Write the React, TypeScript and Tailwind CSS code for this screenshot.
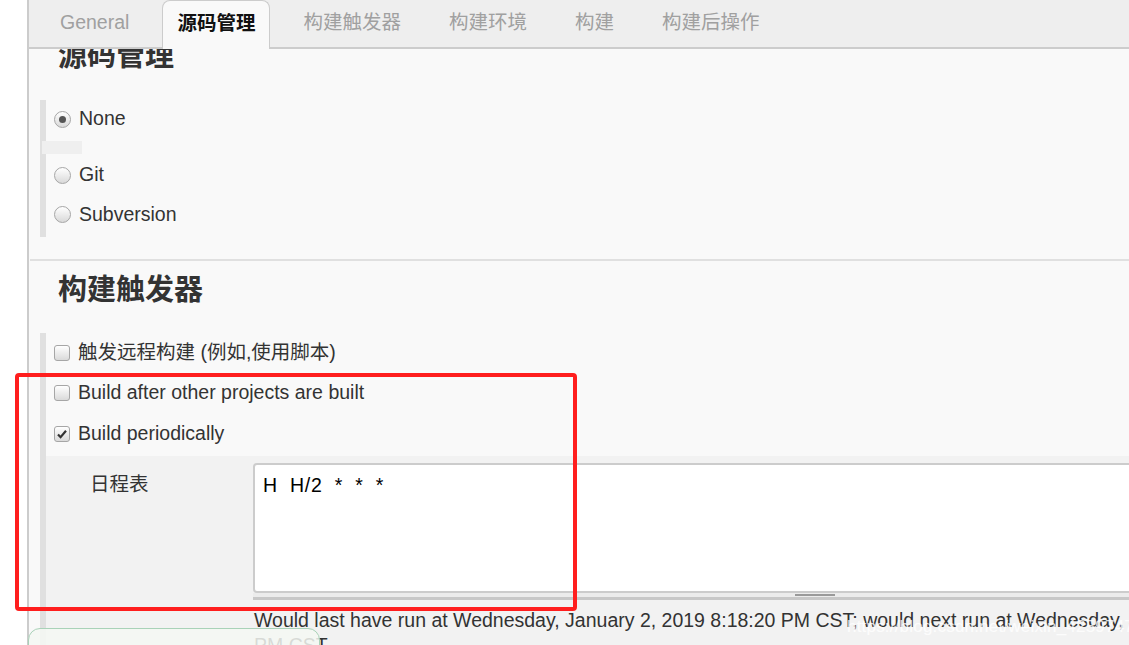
import React from "react";

const tabs = ["General", "源码管理", "构建触发器", "构建环境", "构建", "构建后操作"];

function Radio({ checked }: { checked?: boolean }) {
  return (
    <span className="flex h-[17px] w-[17px] shrink-0 items-center justify-center rounded-full border border-[#a6a6a6] bg-linear-to-b from-white to-[#d9d9d9]">
      {checked && <span className="h-[7px] w-[7px] rounded-full bg-[#555]" />}
    </span>
  );
}

function Checkbox({ checked }: { checked?: boolean }) {
  return (
    <span className="flex h-[16px] w-[16px] shrink-0 items-center justify-center rounded-[3px] border border-[#a6a6a6] bg-linear-to-b from-white to-[#dadada]">
      {checked && (
        <svg width="12" height="12" viewBox="0 0 12 12">
          <path d="M2 6.5 L4.6 9.2 L10 2.8" fill="none" stroke="#333" strokeWidth="2.2" />
        </svg>
      )}
    </span>
  );
}

export default function App() {
  return (
    <div className="relative flex h-[645px] w-full overflow-hidden bg-white font-['Liberation_Sans','Noto_Sans_CJK_SC',sans-serif] text-[19.5px] text-[#333]">
      <div className="w-[27px] shrink-0" />

      <div className="flex w-[1420px] shrink-0 flex-col border-l-2 border-[#ccc] bg-[#f9f9f9]">
        {/* Tabs */}
        <div className="relative z-10 flex h-[49px] shrink-0 items-end gap-[18px] border-b-2 border-[#ccc] bg-[#eee] pl-[16px]">
          {tabs.map((t, i) =>
            i === 1 ? (
              <div
                key={t}
                className="-mb-[2px] flex h-[49px] items-center rounded-t-[8px] border border-b-0 border-[#ccc] bg-[#f9f9f9] px-[14px] pb-[3px] font-bold text-[#111]"
              >
                {t}
              </div>
            ) : (
              <div key={t} className="flex h-[47px] items-center px-[15px] pb-[2px] text-[#a0a0a0]">
                {t}
              </div>
            )
          )}
        </div>

        {/* Content */}
        <div className="flex-1 overflow-hidden">
          <h2 className="-mt-[10px] pl-[29px] text-[29px] leading-[35px] font-bold text-[#333]">源码管理</h2>

          <div className="mt-[26px] ml-[11px] flex flex-col border-l-[6px] border-[#e0e0e0] pl-[8px]">
            <label className="flex h-[38px] items-center gap-[8px]">
              <Radio checked />
              None
            </label>
            <div className="h-[18px] pt-[3px]">
              <div className="-ml-[12px] h-[13px] w-[40px] bg-[#efefef]" />
            </div>
            <label className="flex h-[38px] items-center gap-[8px]">
              <Radio />
              Git
            </label>
            <label className="flex h-[43px] items-center gap-[8px] pb-[2px]">
              <Radio />
              Subversion
            </label>
          </div>

          <div className="mt-[22px] ml-[1px] h-[2px] bg-[#e0e0e0]" />

          <h2 className="mt-[12px] pl-[29px] text-[29px] leading-[35px] font-bold text-[#333]">构建触发器</h2>

          <div className="mt-[25px] ml-[11px] flex flex-col border-l-[6px] border-[#e0e0e0]">
            <label className="flex h-[39px] items-center gap-[8px] pl-[8px]">
              <Checkbox />
              触发远程构建 (例如,使用脚本)
            </label>
            <label className="flex h-[41px] items-center gap-[8px] pl-[8px]">
              <Checkbox />
              Build after other projects are built
            </label>
            <label className="flex h-[43px] items-center gap-[8px] pl-[8px] pb-[1px]">
              <Checkbox checked />
              Build periodically
            </label>

            <div className="flex bg-[#f2f2f2] pt-[7px] pb-[40px]">
              <div className="w-[207px] shrink-0 pt-[8px] pl-[44px] leading-[26px]">日程表</div>
              <div className="flex w-[1124px] shrink-0 flex-col">
                <textarea
                  readOnly
                  value={"H  H/2  *  *  *"}
                  className="h-[130px] w-full resize-none rounded-[4px] border-2 border-[#ccc] bg-white px-[8px] pt-[7px] font-['Liberation_Sans',sans-serif] text-[19.5px] leading-[26px] tracking-[0.7px] text-black outline-none"
                />
                <div className="flex h-[7px] justify-center border-b-[3px] border-[#c8c8c8] bg-[#ececec]">
                  <div className="mt-[1px] h-[2px] w-[40px] bg-[#9a9a9a]" />
                </div>
                <p className="mt-[8px] pl-[1px] leading-[25px] text-[#333]">
                  Would last have run at Wednesday, January 2, 2019 8:18:20 PM CST; would next run at Wednesday, January 2, 2019 10:18:20 PM CST.
                </p>
              </div>
            </div>
          </div>
        </div>
      </div>

      {/* floating notification box */}
      <div className="absolute top-[628px] left-[28px] h-[40px] w-[292px] rounded-[12px] border-[1.5px] border-[#a9d2b8] bg-[#f4f8f3]/85" />

      {/* watermark */}
      <div className="pointer-events-none absolute top-[614px] left-[847px] text-[17px] tracking-[0.2px] text-white/80">
        https://blog.csdn.net/weixin_42597472
      </div>

      {/* red highlight annotation */}
      <div className="pointer-events-none absolute top-[373px] left-[15px] h-[238px] w-[562px] rounded-[4px] border-4 border-[#ff1e1e]" />
    </div>
  );
}
